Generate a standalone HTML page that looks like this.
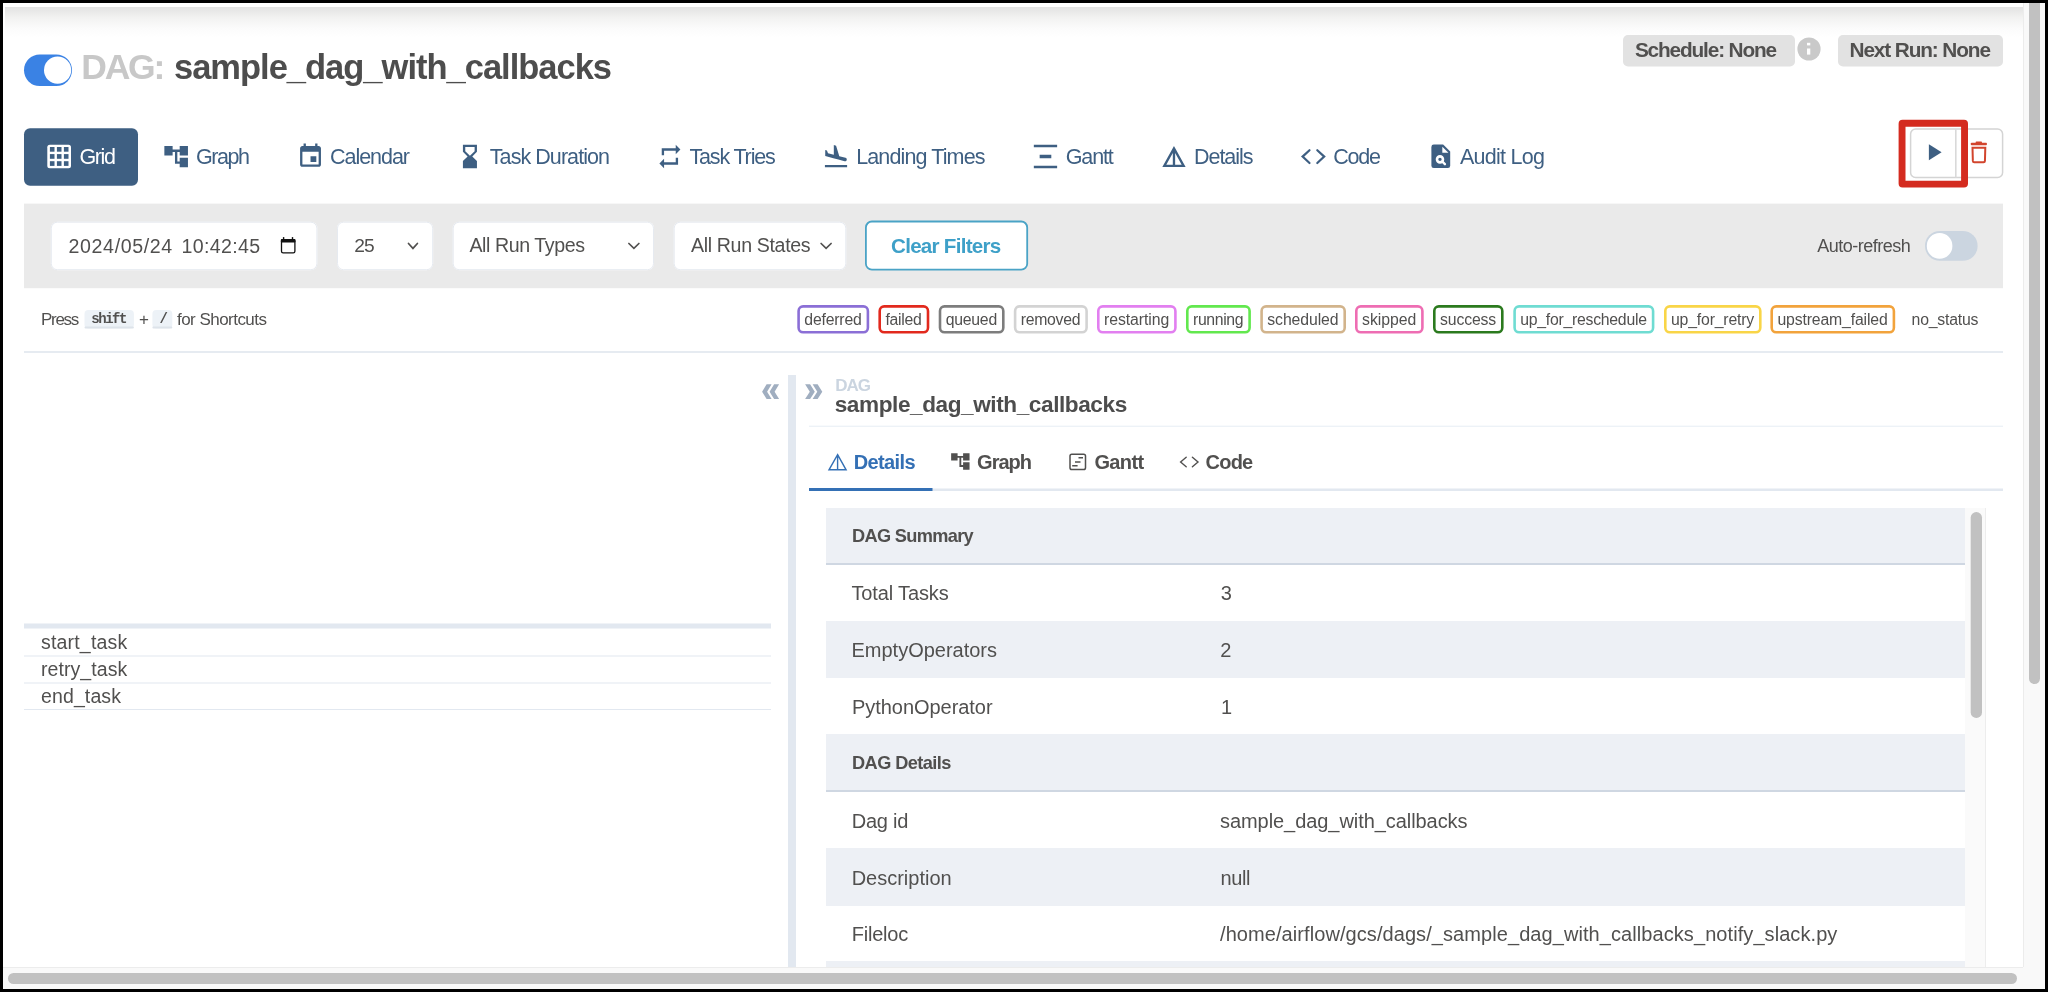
<!DOCTYPE html>
<html><head><meta charset="utf-8">
<style>
*{margin:0;padding:0}
html,body{width:2048px;height:992px;overflow:hidden;background:#000}
svg{position:absolute;left:0;top:0;display:block;will-change:transform}
text{white-space:pre}
</style></head><body>
<svg width="2048" height="992" viewBox="0 0 2048 992">
<rect x="3" y="3" width="2042" height="986" fill="#fff"/>
<defs><linearGradient id="sh" x1="0" y1="0" x2="0" y2="1"><stop offset="0" stop-color="#e2e2e2"/><stop offset="0.35" stop-color="#f2f2f1"/><stop offset="0.7" stop-color="#fbfbfb"/><stop offset="1" stop-color="#fff"/></linearGradient><linearGradient id="shl" x1="0" y1="0" x2="1" y2="0"><stop offset="0" stop-color="#fff" stop-opacity="0.6"/><stop offset="1" stop-color="#fff" stop-opacity="0"/></linearGradient></defs>
<rect x="5" y="7" width="2018" height="30" fill="url(#sh)"/>
<rect x="24" y="54.5" width="48" height="31.5" fill="#3a82e4" rx="15.75"/>
<circle cx="57.6" cy="70.2" r="13.6" fill="#fff"/>
<text x="81.30" y="79" fill="#c8c8c8" style="font-family:'Liberation Sans',sans-serif;font-size:35.5px;font-weight:bold;letter-spacing:-2.234px;">DAG:</text>
<text x="174.00" y="79" fill="#4d4d4d" style="font-family:'Liberation Sans',sans-serif;font-size:34.5px;font-weight:bold;letter-spacing:-1.005px;">sample_dag_with_callbacks</text>
<rect x="1623" y="35" width="172" height="31.5" fill="#e2e2e2" rx="5"/>
<text x="1634.90" y="57" fill="#51504f" style="font-family:'Liberation Sans',sans-serif;font-size:20.8px;font-weight:bold;letter-spacing:-1.150px;">Schedule: None</text>
<circle cx="1809" cy="49" r="11.6" fill="#c9c9c9"/>
<rect x="1807" y="48.5" width="3.3" height="6.1" fill="#fff"/>
<rect x="1807" y="42.8" width="3.3" height="2.6" fill="#fff"/>
<rect x="1838" y="35" width="165" height="31.5" fill="#e2e2e2" rx="5"/>
<text x="1849.50" y="57" fill="#51504f" style="font-family:'Liberation Sans',sans-serif;font-size:20.8px;font-weight:bold;letter-spacing:-1.115px;">Next Run: None</text>
<rect x="24" y="128.3" width="114" height="57.4" fill="#3e5f82" rx="6"/>
<rect x="47.3" y="144.7" width="23.7" height="23.6" fill="#fff" rx="2.5"/>
<rect x="49.9" y="147.0" width="4.6" height="4.7" fill="#3e5f82"/>
<rect x="49.9" y="154.1" width="4.6" height="4.7" fill="#3e5f82"/>
<rect x="49.9" y="161.2" width="4.6" height="4.7" fill="#3e5f82"/>
<rect x="56.9" y="147.0" width="4.6" height="4.7" fill="#3e5f82"/>
<rect x="56.9" y="154.1" width="4.6" height="4.7" fill="#3e5f82"/>
<rect x="56.9" y="161.2" width="4.6" height="4.7" fill="#3e5f82"/>
<rect x="63.9" y="147.0" width="4.6" height="4.7" fill="#3e5f82"/>
<rect x="63.9" y="154.1" width="4.6" height="4.7" fill="#3e5f82"/>
<rect x="63.9" y="161.2" width="4.6" height="4.7" fill="#3e5f82"/>
<text x="79.40" y="163.8" fill="#fff" style="font-family:'Liberation Sans',sans-serif;font-size:21.5px;letter-spacing:-1.378px;">Grid</text>
<g transform="translate(162.0,142.5) scale(1.18)"><path d="M22 11V3h-7v3H9V3H2v8h7V8h2v10h4v3h7v-8h-7v3h-2V8h2v3z" fill="#3e5f82"/></g>
<text x="196.00" y="163.8" fill="#3e5f82" style="font-family:'Liberation Sans',sans-serif;font-size:21.5px;letter-spacing:-1.442px;">Graph</text>
<g transform="translate(296.6,142.4) scale(1.16)"><path d="M17 12h-5v5h5v-5zM16 1v2H8V1H6v2H5c-1.11 0-1.99.9-1.99 2L3 19c0 1.1.89 2 2 2h14c1.1 0 2-.9 2-2V5c0-1.1-.9-2-2-2h-1V1h-2zm3 18H5V8h14v11z" fill="#3e5f82"/></g>
<text x="330.00" y="163.8" fill="#3e5f82" style="font-family:'Liberation Sans',sans-serif;font-size:21.5px;letter-spacing:-1.041px;">Calendar</text>
<g transform="translate(455.9,142.4) scale(1.17)"><path d="M18 22l-.01-6L14 12l3.99-4.01L18 2H6v6l4 4-4 3.99V22h12zM8 7.5V4h8v3.5l-4 4-4-4z" fill="#3e5f82"/></g>
<text x="489.80" y="163.8" fill="#3e5f82" style="font-family:'Liberation Sans',sans-serif;font-size:21.5px;letter-spacing:-0.939px;">Task Duration</text>
<g transform="translate(655.9,142.5) scale(1.167)"><path d="M7 7h10v3l4-4-4-4v3H5v6h2V7zm10 10H7v-3l-4 4 4 4v-3h12v-6h-2v4z" fill="#3e5f82"/></g>
<text x="689.40" y="163.8" fill="#3e5f82" style="font-family:'Liberation Sans',sans-serif;font-size:21.5px;letter-spacing:-1.150px;">Task Tries</text>
<g transform="translate(822.0,142.7) scale(1.168)"><path d="M2.5 19h19v2h-19v-2zm7.18-5.73l4.35 1.16 5.31 1.42c.8.21 1.62-.26 1.84-1.06.21-.8-.26-1.62-1.06-1.84l-5.31-1.42-2.76-9.02L10.12 2v8.28L5.15 8.95l-.93-2.32-1.45-.39v5.17l1.6.43 5.31 1.43z" fill="#3e5f82"/></g>
<text x="856.20" y="163.8" fill="#3e5f82" style="font-family:'Liberation Sans',sans-serif;font-size:21.5px;letter-spacing:-0.880px;">Landing Times</text>
<g transform="translate(1031.5,142.5) scale(1.165)"><path d="M22 2v2H2V2h20zM7 10.5v3h10v-3H7zM2 20v2h20v-2H2z" fill="#3e5f82"/></g>
<text x="1065.70" y="163.8" fill="#3e5f82" style="font-family:'Liberation Sans',sans-serif;font-size:21.5px;letter-spacing:-1.117px;">Gantt</text>
<g transform="translate(1160,142.5) scale(1.165)"><path d="M12 3L2 21h20L12 3zm1 5.92L18.6 19H13V8.92zm-2 0V19H5.4L11 8.92z" fill="#3e5f82"/></g>
<text x="1194.00" y="163.8" fill="#3e5f82" style="font-family:'Liberation Sans',sans-serif;font-size:21.5px;letter-spacing:-1.030px;">Details</text>
<path d="M1309.5 150.2 L1302.6 156.6 L1309.5 163 M1317.3 150.2 L1324.2 156.6 L1317.3 163" fill="none" stroke="#3e5f82" stroke-width="2.2" stroke-linecap="round" stroke-linejoin="miter"/>
<text x="1333.30" y="163.8" fill="#3e5f82" style="font-family:'Liberation Sans',sans-serif;font-size:21.5px;letter-spacing:-1.228px;">Code</text>
<g transform="translate(1426.7,142.2) scale(1.175)"><path d="M6 2h8l6 6v12a2 2 0 0 1-2 2H6a2 2 0 0 1-2-2V4a2 2 0 0 1 2-2z" fill="#3e5f82"/><path d="M13.3 3.8V9h5.2z" fill="#fff"/><circle cx="11.3" cy="14.6" r="2.55" fill="none" stroke="#fff" stroke-width="2.2"/><path d="M13.3 16.6l2.2 2.1" stroke="#fff" stroke-width="2" stroke-linecap="round"/></g>
<text x="1460.00" y="163.8" fill="#3e5f82" style="font-family:'Liberation Sans',sans-serif;font-size:21.5px;letter-spacing:-0.730px;">Audit Log</text>
<rect x="1910.6" y="129" width="92" height="48.5" fill="#fff" rx="5" stroke="#d4d4d4" stroke-width="1.5"/>
<rect x="1955" y="129" width="1.6" height="48.5" fill="#d9d9d9"/>
<path d="M1928.9 144.2 L1941.6 152.25 L1928.9 160.3z" fill="#3e5f82"/>
<g fill="none" stroke="#d2452e" stroke-width="2"><path d="M1972.5 147.8 h12.8 l-0.35 13.1 a1.4 1.4 0 0 1 -1.4 1.3 h-9.3 a1.4 1.4 0 0 1 -1.4 -1.3 z"/></g>
<rect x="1970.8" y="142.8" width="16.1" height="2.4" fill="#d2452e" rx="0.8"/>
<rect x="1975.6" y="141.4" width="6.4" height="2" fill="#d2452e" rx="0.8"/>
<path fill-rule="evenodd" fill="#d42b1f" d="M1902.6 119.8 h61.4 a4 4 0 0 1 4 4 v59.8 a4 4 0 0 1 -4 4 h-61.4 a4 4 0 0 1 -4 -4 v-59.8 a4 4 0 0 1 4 -4z M1905.5 126.7 v54 h55.6 v-54z"/>
<rect x="24" y="203.6" width="1979" height="84.6" fill="#eaeaea"/>
<rect x="50.8" y="221.7" width="266.6" height="48.5" fill="#fff" rx="6.5"/>
<rect x="51.3" y="222.2" width="265.6" height="47.5" fill="none" rx="6" stroke="#e6eaf0" stroke-width="1"/>
<rect x="337" y="221.7" width="96.2" height="48.5" fill="#fff" rx="6.5"/>
<rect x="337.5" y="222.2" width="95.2" height="47.5" fill="none" rx="6" stroke="#e6eaf0" stroke-width="1"/>
<rect x="452.7" y="221.7" width="201.3" height="48.5" fill="#fff" rx="6.5"/>
<rect x="453.2" y="222.2" width="200.3" height="47.5" fill="none" rx="6" stroke="#e6eaf0" stroke-width="1"/>
<rect x="673.7" y="221.7" width="172.6" height="48.5" fill="#fff" rx="6.5"/>
<rect x="674.2" y="222.2" width="171.6" height="47.5" fill="none" rx="6" stroke="#e6eaf0" stroke-width="1"/>
<rect x="865.9" y="221.5" width="161.3" height="48.2" fill="#fff" rx="6" stroke="#4aa3c6" stroke-width="1.8"/>
<rect x="24" y="351" width="1979" height="2" fill="#e6ebf1"/>
<rect x="24" y="623.5" width="747" height="5" fill="#e2e8f0"/>
<rect x="24" y="655.5" width="747" height="1" fill="#e2e8f0"/>
<rect x="24" y="682.5" width="747" height="1" fill="#e2e8f0"/>
<rect x="24" y="709" width="747" height="1" fill="#e2e8f0"/>
<rect x="788" y="375" width="8" height="592" fill="#e2e8f0"/>
<rect x="809" y="425.6" width="1194" height="1.4" fill="#edf2f7"/>
<rect x="809" y="488.5" width="1194" height="2.5" fill="#e2e8f0"/>
<rect x="809" y="488" width="123.5" height="3" fill="#3470b5"/>
<rect x="826" y="508" width="1139" height="57" fill="#edf0f5"/>
<rect x="826" y="563" width="1139" height="2" fill="#cfd7e2"/>
<rect x="826" y="621" width="1139" height="57" fill="#edf0f5"/>
<rect x="826" y="734" width="1139" height="58" fill="#edf0f5"/>
<rect x="826" y="790" width="1139" height="2" fill="#cfd7e2"/>
<rect x="826" y="848" width="1139" height="58" fill="#edf0f5"/>
<rect x="826" y="961" width="1139" height="6" fill="#edf0f5"/>
<rect x="1965" y="508" width="21" height="459" fill="#fafafa"/>
<rect x="1985" y="508" width="1" height="459" fill="#ededed"/>
<rect x="1970.7" y="512" width="11.3" height="206" fill="#c1c1c1" rx="5.6"/>
<text x="68.60" y="252.5" fill="#51504f" style="font-family:'Liberation Sans',sans-serif;font-size:19.6px;letter-spacing:0.611px;">2024/05/24</text>
<text x="181.60" y="252.5" fill="#51504f" style="font-family:'Liberation Sans',sans-serif;font-size:19.6px;letter-spacing:0.337px;">10:42:45</text>
<g fill="none" stroke="#111" stroke-width="1.3"><rect x="281.5" y="239.6" width="13.4" height="13.3" rx="1.6"/></g>
<rect x="280.8" y="238.9" width="14.7" height="3.5" fill="#111" rx="1"/>
<rect x="282.9" y="237.1" width="1.4" height="2.5" fill="#111"/>
<rect x="291.8" y="237.1" width="1.4" height="2.5" fill="#111"/>
<text x="354.30" y="251.9" fill="#51504f" style="font-family:'Liberation Sans',sans-serif;font-size:19.2px;letter-spacing:-0.912px;">25</text>
<path d="M408.5 243.5 L412.95 248.4 L417.4 243.5" fill="none" stroke="#51504f" stroke-width="1.7" stroke-linecap="round"/>
<text x="469.40" y="252.3" fill="#51504f" style="font-family:'Liberation Sans',sans-serif;font-size:19.6px;letter-spacing:-0.412px;">All Run Types</text>
<path d="M628.9 243.5 L633.9 248.4 L638.9 243.5" fill="none" stroke="#51504f" stroke-width="1.7" stroke-linecap="round"/>
<text x="691.00" y="252.3" fill="#51504f" style="font-family:'Liberation Sans',sans-serif;font-size:19.6px;letter-spacing:-0.351px;">All Run States</text>
<path d="M821.1 243.5 L826.1 248.4 L831.1 243.5" fill="none" stroke="#51504f" stroke-width="1.7" stroke-linecap="round"/>
<text x="891.00" y="253" fill="#3ea0c8" style="font-family:'Liberation Sans',sans-serif;font-size:20.6px;font-weight:bold;letter-spacing:-0.731px;">Clear Filters</text>
<text x="1817.30" y="252.3" fill="#51504f" style="font-family:'Liberation Sans',sans-serif;font-size:18px;letter-spacing:-0.499px;">Auto-refresh</text>
<rect x="1925" y="231" width="52.6" height="29.8" fill="#cbd5e0" rx="14.9"/>
<circle cx="1939.6" cy="245.9" r="12.8" fill="#fff"/>
<text x="41.10" y="324.7" fill="#51504f" style="font-family:'Liberation Sans',sans-serif;font-size:17px;letter-spacing:-1.334px;">Press</text>
<rect x="84.5" y="310" width="49.4" height="18.6" fill="#edf2f7" rx="4"/>
<rect x="84.5" y="326.6" width="49.4" height="2" fill="#dde3ea" rx="1"/>
<text x="91.30" y="322.8" fill="#51504f" style="font-family:'Liberation Mono',monospace;font-size:14px;font-weight:bold;letter-spacing:-1.475px;">shift</text>
<text x="139.10" y="324.7" fill="#51504f" style="font-family:'Liberation Sans',sans-serif;font-size:17px;">+</text>
<rect x="152.4" y="310" width="19.9" height="18.6" fill="#edf2f7" rx="4"/>
<rect x="152.4" y="326.6" width="19.9" height="2" fill="#dde3ea" rx="1"/>
<text x="159.60" y="322.8" fill="#51504f" style="font-family:'Liberation Mono',monospace;font-size:14px;font-weight:bold;">/</text>
<text x="177.00" y="324.7" fill="#51504f" style="font-family:'Liberation Sans',sans-serif;font-size:17px;letter-spacing:-0.533px;">for Shortcuts</text>
<rect x="798.5999999999999" y="306.4" width="69.3000000000001" height="25.9" fill="#fff" rx="4.5" stroke="#8b6fd6" stroke-width="2.6"/>
<text x="804.30" y="325" fill="#51504f" style="font-family:'Liberation Sans',sans-serif;font-size:15.8px;letter-spacing:-0.194px;">deferred</text>
<rect x="879.6999999999999" y="306.4" width="48.299999999999976" height="25.9" fill="#fff" rx="4.5" stroke="#e2291d" stroke-width="2.6"/>
<text x="885.40" y="325" fill="#51504f" style="font-family:'Liberation Sans',sans-serif;font-size:15.8px;letter-spacing:-0.252px;">failed</text>
<rect x="940.0" y="306.4" width="63.299999999999976" height="25.9" fill="#fff" rx="4.5" stroke="#7d7d7d" stroke-width="2.6"/>
<text x="945.70" y="325" fill="#51504f" style="font-family:'Liberation Sans',sans-serif;font-size:15.8px;letter-spacing:-0.239px;">queued</text>
<rect x="1015.0999999999999" y="306.4" width="71.50000000000014" height="25.9" fill="#fff" rx="4.5" stroke="#d3d3d3" stroke-width="2.6"/>
<text x="1020.80" y="325" fill="#51504f" style="font-family:'Liberation Sans',sans-serif;font-size:15.8px;letter-spacing:-0.294px;">removed</text>
<rect x="1098.3" y="306.4" width="77.10000000000005" height="25.9" fill="#fff" rx="4.5" stroke="#e27ff0" stroke-width="2.6"/>
<text x="1104.00" y="325" fill="#51504f" style="font-family:'Liberation Sans',sans-serif;font-size:15.8px;letter-spacing:-0.065px;">restarting</text>
<rect x="1187.3" y="306.4" width="62.30000000000009" height="25.9" fill="#fff" rx="4.5" stroke="#62e84e" stroke-width="2.6"/>
<text x="1193.00" y="325" fill="#51504f" style="font-family:'Liberation Sans',sans-serif;font-size:15.8px;letter-spacing:-0.365px;">running</text>
<rect x="1261.6" y="306.4" width="83.10000000000005" height="25.9" fill="#fff" rx="4.5" stroke="#d2b48c" stroke-width="2.6"/>
<text x="1267.30" y="325" fill="#51504f" style="font-family:'Liberation Sans',sans-serif;font-size:15.8px;letter-spacing:-0.093px;">scheduled</text>
<rect x="1356.3" y="306.4" width="66.10000000000005" height="25.9" fill="#fff" rx="4.5" stroke="#ee6db3" stroke-width="2.6"/>
<text x="1362.00" y="325" fill="#51504f" style="font-family:'Liberation Sans',sans-serif;font-size:15.8px;letter-spacing:-0.022px;">skipped</text>
<rect x="1434.3" y="306.4" width="67.99999999999991" height="25.9" fill="#fff" rx="4.5" stroke="#2b7a1e" stroke-width="2.6"/>
<text x="1440.00" y="325" fill="#51504f" style="font-family:'Liberation Sans',sans-serif;font-size:15.8px;letter-spacing:-0.140px;">success</text>
<rect x="1514.6" y="306.4" width="138.50000000000014" height="25.9" fill="#fff" rx="4.5" stroke="#6fdcd2" stroke-width="2.6"/>
<text x="1520.30" y="325" fill="#51504f" style="font-family:'Liberation Sans',sans-serif;font-size:15.8px;letter-spacing:-0.263px;">up_for_reschedule</text>
<rect x="1665.3" y="306.4" width="94.99999999999991" height="25.9" fill="#fff" rx="4.5" stroke="#f9d547" stroke-width="2.6"/>
<text x="1671.00" y="325" fill="#51504f" style="font-family:'Liberation Sans',sans-serif;font-size:15.8px;letter-spacing:-0.178px;">up_for_retry</text>
<rect x="1771.7" y="306.4" width="122.19999999999996" height="25.9" fill="#fff" rx="4.5" stroke="#f2a33c" stroke-width="2.6"/>
<text x="1777.40" y="325" fill="#51504f" style="font-family:'Liberation Sans',sans-serif;font-size:15.8px;letter-spacing:-0.144px;">upstream_failed</text>
<text x="1911.60" y="325" fill="#51504f" style="font-family:'Liberation Sans',sans-serif;font-size:15.8px;letter-spacing:-0.212px;">no_status</text>
<text x="41.00" y="648.8" fill="#51504f" style="font-family:'Liberation Sans',sans-serif;font-size:19.5px;letter-spacing:0.186px;">start_task</text>
<text x="41.00" y="675.8" fill="#51504f" style="font-family:'Liberation Sans',sans-serif;font-size:19.5px;letter-spacing:0.066px;">retry_task</text>
<text x="41.00" y="702.5" fill="#51504f" style="font-family:'Liberation Sans',sans-serif;font-size:19.5px;letter-spacing:0.119px;">end_task</text>
<path d="M762.1 391.65 L766.6 384.3 L771.6 384.3 L767.1 391.65 L771.6 399 L766.6 399z" fill="#a0aec0"/>
<path d="M769.6 391.65 L774.1 384.3 L779.1 384.3 L774.6 391.65 L779.1 399 L774.1 399z" fill="#a0aec0"/>
<path d="M814.8 391.65 L810.1 384.3 L805.1 384.3 L809.8 391.65 L805.1 399 L810.1 399z" fill="#a0aec0"/>
<path d="M822.3 391.65 L817.6 384.3 L812.6 384.3 L817.3 391.65 L812.6 399 L817.6 399z" fill="#a0aec0"/>
<text x="835.20" y="391.1" fill="#cbd5e0" style="font-family:'Liberation Sans',sans-serif;font-size:17px;font-weight:bold;letter-spacing:-0.970px;">DAG</text>
<text x="834.70" y="412.2" fill="#4d4d4d" style="font-family:'Liberation Sans',sans-serif;font-size:22.6px;font-weight:bold;letter-spacing:-0.422px;">sample_dag_with_callbacks</text>
<g fill="none" stroke="#3470b5" stroke-width="1.4"><path d="M837.6 454.6 L846.1 469.8 H829 z M837.6 455 V469.8"/></g>
<text x="853.80" y="468.9" fill="#3470b5" style="font-family:'Liberation Sans',sans-serif;font-size:20px;font-weight:bold;letter-spacing:-0.633px;">Details</text>
<g transform="translate(949.3,450.4) scale(0.92)"><path d="M22 11V3h-7v3H9V3H2v8h7V8h2v10h4v3h7v-8h-7v3h-2V8h2v3z" fill="#51504f"/></g>
<text x="977.10" y="468.9" fill="#51504f" style="font-family:'Liberation Sans',sans-serif;font-size:20px;font-weight:bold;letter-spacing:-1.000px;">Graph</text>
<g fill="none" stroke="#51504f" stroke-width="1.5"><rect x="1070" y="454.3" width="15.5" height="15.2" rx="1.8"/><path d="M1078.5 457.8h4.5M1075 461.9h5.5M1072.2 465.8h5.4"/></g>
<text x="1094.40" y="468.9" fill="#51504f" style="font-family:'Liberation Sans',sans-serif;font-size:20px;font-weight:bold;letter-spacing:-0.600px;">Gantt</text>
<path d="M1186.2 457.2 L1180.6 462 L1186.2 466.8 M1192.4 457.2 L1198 462 L1192.4 466.8" fill="none" stroke="#51504f" stroke-width="1.4" stroke-linecap="round"/>
<text x="1205.50" y="468.9" fill="#51504f" style="font-family:'Liberation Sans',sans-serif;font-size:20px;font-weight:bold;letter-spacing:-0.767px;">Code</text>
<text x="852.00" y="541.6" fill="#51504f" style="font-family:'Liberation Sans',sans-serif;font-size:18.2px;font-weight:bold;letter-spacing:-0.669px;">DAG Summary</text>
<text x="851.50" y="600.1" fill="#51504f" style="font-family:'Liberation Sans',sans-serif;font-size:20px;letter-spacing:-0.140px;">Total Tasks</text>
<text x="1220.70" y="600.1" fill="#51504f" style="font-family:'Liberation Sans',sans-serif;font-size:20px;">3</text>
<text x="851.50" y="657.2" fill="#51504f" style="font-family:'Liberation Sans',sans-serif;font-size:20px;letter-spacing:-0.008px;">EmptyOperators</text>
<text x="1220.20" y="657.2" fill="#51504f" style="font-family:'Liberation Sans',sans-serif;font-size:20px;">2</text>
<text x="852.00" y="713.9" fill="#51504f" style="font-family:'Liberation Sans',sans-serif;font-size:20px;letter-spacing:-0.046px;">PythonOperator</text>
<text x="1221.00" y="713.9" fill="#51504f" style="font-family:'Liberation Sans',sans-serif;font-size:20px;">1</text>
<text x="852.00" y="768.9" fill="#51504f" style="font-family:'Liberation Sans',sans-serif;font-size:18.2px;font-weight:bold;letter-spacing:-0.570px;">DAG Details</text>
<text x="851.70" y="828.3" fill="#51504f" style="font-family:'Liberation Sans',sans-serif;font-size:20px;letter-spacing:-0.240px;">Dag id</text>
<text x="1220.00" y="828.3" fill="#51504f" style="font-family:'Liberation Sans',sans-serif;font-size:20px;letter-spacing:-0.062px;">sample_dag_with_callbacks</text>
<text x="851.70" y="884.7" fill="#51504f" style="font-family:'Liberation Sans',sans-serif;font-size:20px;letter-spacing:-0.010px;">Description</text>
<text x="1220.50" y="884.7" fill="#51504f" style="font-family:'Liberation Sans',sans-serif;font-size:20px;letter-spacing:-0.367px;">null</text>
<text x="851.70" y="941.3" fill="#51504f" style="font-family:'Liberation Sans',sans-serif;font-size:20px;letter-spacing:-0.200px;">Fileloc</text>
<text x="1220.00" y="941.3" fill="#51504f" style="font-family:'Liberation Sans',sans-serif;font-size:20px;letter-spacing:0.075px;">/home/airflow/gcs/dags/_sample_dag_with_callbacks_notify_slack.py</text>
<rect x="2023" y="3" width="22" height="964" fill="#f9f9f9"/>
<rect x="2023" y="3" width="1" height="964" fill="#ececec"/>
<rect x="2029" y="3" width="11" height="681" fill="#c1c1c1" rx="5.5"/>
<rect x="2029" y="3" width="11" height="10" fill="#c1c1c1"/>
<rect x="3" y="967" width="2042" height="22" fill="#f9f9f9"/>
<rect x="3" y="967" width="2020" height="1" fill="#ececec"/>
<rect x="8" y="973" width="2009" height="11" fill="#c1c1c1" rx="5.5"/>
</svg>
</body></html>
